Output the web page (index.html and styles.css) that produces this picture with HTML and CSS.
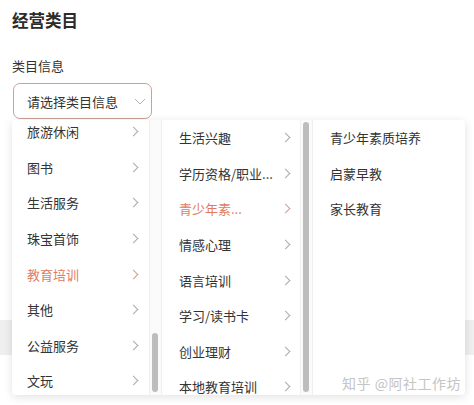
FILE: index.html
```html
<!DOCTYPE html>
<html lang="zh-CN">
<head>
    <meta charset="UTF-8">
    <meta name="viewport" content="width=device-width, initial-scale=1.0">
    <title>经营类目</title>
    <link rel="stylesheet" href="styles.css">
</head>
<body>
    <div class="page">
        <h1 class="title">经营类目</h1>
        <div class="field-label">类目信息</div>
        <div class="select">
            <span>请选择类目信息</span>
            <svg class="caret" width="12" height="7" viewBox="0 0 12 7"><path d="M1 1l5 5 5-5" fill="none" stroke="#b5b5b5" stroke-width="1"/></svg>
        </div>
        <div class="below">
            <div class="grey-band"></div>
        </div>

        <div class="dropdown">
            <div class="column col-1">
                <ul class="list shifted">
                    <li>旅游休闲<i class="arrow"></i></li>
                    <li>图书<i class="arrow"></i></li>
                    <li>生活服务<i class="arrow"></i></li>
                    <li>珠宝首饰<i class="arrow"></i></li>
                    <li class="active">教育培训<i class="arrow"></i></li>
                    <li>其他<i class="arrow"></i></li>
                    <li>公益服务<i class="arrow"></i></li>
                    <li>文玩<i class="arrow"></i></li>
                </ul>
                <div class="track"><div class="thumb thumb-1"></div></div>
            </div>
            <div class="column col-2">
                <ul class="list">
                    <li>生活兴趣<i class="arrow"></i></li>
                    <li>学历资格/职业...<i class="arrow"></i></li>
                    <li class="active">青少年素...<i class="arrow"></i></li>
                    <li>情感心理<i class="arrow"></i></li>
                    <li>语言培训<i class="arrow"></i></li>
                    <li>学习/读书卡<i class="arrow"></i></li>
                    <li>创业理财<i class="arrow"></i></li>
                    <li>本地教育培训<i class="arrow"></i></li>
                </ul>
                <div class="track"><div class="thumb thumb-2"></div></div>
            </div>
            <div class="column col-3">
                <ul class="list">
                    <li>青少年素质培养</li>
                    <li>启蒙早教</li>
                    <li>家长教育</li>
                </ul>
            </div>
            <div class="watermark">知乎 @阿社工作坊</div>
        </div>
    </div>
</body>
</html>
```

FILE: styles.css
```css
body {
    margin: 0;
    background: #ffffff;
    font-family: "Noto Sans CJK SC", "Noto Sans", sans-serif;
    color: #333333;
}

.page {
    position: relative;
    width: 474px;
    height: 405px;
    overflow: hidden;
}

.title {
    margin: 0;
    padding: 8px 0 0 12px;
    font-size: 16.5px;
    line-height: 24px;
    font-weight: 700;
    color: #2b2b2b;
}

.field-label {
    margin-top: 24px;
    padding-left: 12px;
    font-size: 13px;
    line-height: 20px;
    color: #333333;
}

.select {
    display: flex;
    align-items: center;
    justify-content: space-between;
    box-sizing: border-box;
    width: 139px;
    height: 36px;
    margin: 7px 0 0 13px;
    padding: 0 5px 0 13px;
    border: 1px solid #c9a296;
    border-radius: 7px;
    font-size: 13px;
    color: #333333;
}

.below {
    padding-top: 201px;
}

.grey-band {
    height: 35px;
    background: #efefef;
}

.dropdown {
    position: absolute;
    top: 120px;
    left: 12px;
    width: 453px;
    height: 275px;
    display: flex;
    background: #ffffff;
    border-radius: 4px;
    box-shadow: 0 2px 10px rgba(0, 0, 0, 0.12);
    overflow: hidden;
}

.column {
    display: flex;
    height: 100%;
    overflow: hidden;
}

.col-1 {
    width: 150px;
}

.col-2 {
    width: 151px;
}

.col-3 {
    flex: 1;
}

.list {
    flex: 1;
    margin: 0;
    padding: 0;
    list-style: none;
}

.list.shifted {
    margin-top: -6px;
}

.list li {
    display: flex;
    align-items: center;
    justify-content: space-between;
    height: 35.6px;
    padding: 0 10px 0 15px;
    font-size: 13px;
    color: #333333;
    white-space: nowrap;
}

.col-2 .list li {
    padding-left: 17px;
    padding-right: 9px;
}

.col-3 .list li {
    padding-left: 17px;
}

.list li.active {
    color: #df7b62;
}

.arrow {
    width: 6px;
    height: 6px;
    margin-right: 2px;
    border-top: 1px solid #aaaaaa;
    border-right: 1px solid #aaaaaa;
    transform: rotate(45deg);
}

.active .arrow {
    border-color: #d99b8a;
}

.track {
    position: relative;
    width: 11px;
    border-left: 1px solid #efefef;
    border-right: 1px solid #efefef;
    background: #fbfbfb;
}

.thumb {
    position: absolute;
    left: 2px;
    width: 6px;
    border-radius: 3px;
    background: #bdbdbd;
}

.thumb-1 {
    top: 213px;
    height: 59px;
}

.thumb-2 {
    top: 2px;
    height: 270px;
}

.watermark {
    position: absolute;
    right: 4px;
    bottom: 2px;
    font-size: 14px;
    letter-spacing: 0.5px;
    color: #c4c4c4;
}
```
